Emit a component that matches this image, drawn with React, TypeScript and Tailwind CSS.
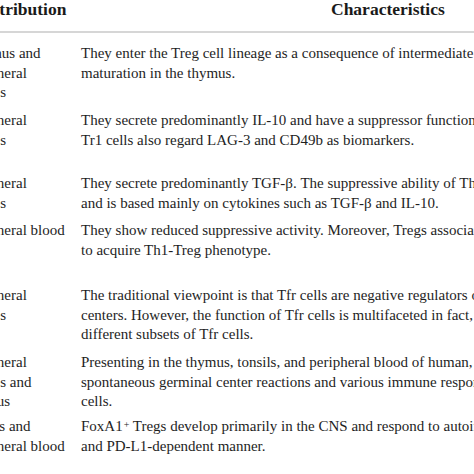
import React from "react";

type Row = { h: string; left: React.ReactNode[]; right: React.ReactNode[] };

const rows: Row[] = [
  {
    h: "h-[67px]",
    left: ["Thymus and", "peripheral", "tissues"],
    right: [
      "They enter the Treg cell lineage as a consequence of intermediate or high-affinity TCR signals during",
      "maturation in the thymus.",
    ],
  },
  {
    h: "h-[63px]",
    left: ["peripheral", "tissues"],
    right: [
      "They secrete predominantly IL-10 and have a suppressor function that is IL-10 dependent.",
      "Tr1 cells also regard LAG-3 and CD49b as biomarkers.",
    ],
  },
  {
    h: "h-[47px]",
    left: ["peripheral", "tissues"],
    right: [
      "They secrete predominantly TGF-β. The suppressive ability of Th3 cells is antigen-specific",
      "and is based mainly on cytokines such as TGF-β and IL-10.",
    ],
  },
  {
    h: "h-[65px]",
    left: ["peripheral blood"],
    right: [
      "They show reduced suppressive activity. Moreover, Tregs associated with inflammation tend",
      "to acquire Th1-Treg phenotype.",
    ],
  },
  {
    h: "h-[67px]",
    left: ["peripheral", "tissues"],
    right: [
      "The traditional viewpoint is that Tfr cells are negative regulators of germinal",
      "centers. However, the function of Tfr cells is multifaceted in fact, which may be due to",
      "different subsets of Tfr cells.",
    ],
  },
  {
    h: "h-[64px]",
    left: ["peripheral", "tissues and", "thymus"],
    right: [
      "Presenting in the thymus, tonsils, and peripheral blood of human, they inhibit",
      "spontaneous germinal center reactions and various immune responses mediated by T",
      "cells.",
    ],
  },
  {
    h: "h-[50px]",
    left: ["Brains and", "peripheral blood"],
    right: [
      <>
        FoxA1<sup className="text-[10px] relative top-[-3px] ml-[1px]">+</sup> Tregs develop primarily in the CNS and respond to autoimmune attack in a FasL-
      </>,
      "and PD-L1-dependent manner.",
    ],
  },
];

export default function App() {
  return (
    <div
      className="w-[474px] h-[474px] overflow-hidden bg-white text-[#1e1e1e]"
      style={{ fontFamily: '"Liberation Serif", "Times New Roman", serif' }}
    >
      <div className="ml-[-34px] w-[900px]">
        <div className="flex h-[31px] items-start pt-[1px] text-[17.5px] leading-[16px] font-bold text-[#1a1a1a]">
          <div className="w-[115px] shrink-0 pl-[9px] whitespace-nowrap">Distribution</div>
          <div className="pl-[250px] whitespace-nowrap">Characteristics</div>
        </div>
        <div className="h-[2px] bg-[#d6d6d6]" />
        <div className="pt-[11px] text-[15px] leading-[19.7px]">
          {rows.map((r, i) => (
            <div key={i} className={`flex ${r.h}`}>
              <div className="w-[115px] shrink-0 whitespace-nowrap">
                {r.left.map((l, j) => (
                  <div key={j}>{l}</div>
                ))}
              </div>
              <div className="whitespace-nowrap">
                {r.right.map((l, j) => (
                  <div key={j}>{l}</div>
                ))}
              </div>
            </div>
          ))}
        </div>
      </div>
    </div>
  );
}
